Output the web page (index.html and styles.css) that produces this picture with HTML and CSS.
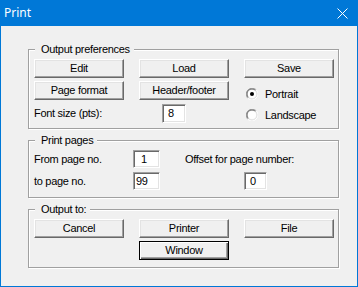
FILE: index.html
```html
<!DOCTYPE html>
<html>
<head>
<meta charset="utf-8">
<link rel="stylesheet" href="styles.css">
</head>
<body>
<div class="window">
  <div class="titlebar">
    <span class="title">Print</span>
    <svg class="close" width="11" height="11" viewBox="0 0 11 11"><path d="M0.5 0.5 L10.5 10.5 M10.5 0.5 L0.5 10.5" stroke="#fff" stroke-width="1" fill="none"/></svg>
  </div>
  <div class="content">
    <div class="group">
      <span class="legend">Output preferences</span>
      <div class="prefs">
        <button class="btn">Edit</button>
        <button class="btn">Load</button>
        <button class="btn">Save</button>
        <button class="btn">Page format</button>
        <button class="btn">Header/footer</button>
        <div class="radios">
          <label class="radio">
            <svg width="12" height="12" viewBox="0 0 12 12"><path d="M1.76 10.24 A6 6 0 0 1 10.24 1.76" stroke="#a0a0a0" fill="none"/><path d="M10.24 1.76 A6 6 0 0 1 1.76 10.24" stroke="#fff" fill="none"/><path d="M2.46 9.54 A5 5 0 0 1 9.54 2.46" stroke="#696969" fill="none"/><path d="M9.54 2.46 A5 5 0 0 1 2.46 9.54" stroke="#e3e3e3" fill="none"/><circle cx="6" cy="6" r="4" fill="#fff"/><circle cx="6" cy="6" r="2" fill="#000"/></svg>
            <span>Portrait</span>
          </label>
          <label class="radio">
            <svg width="12" height="12" viewBox="0 0 12 12"><path d="M1.76 10.24 A6 6 0 0 1 10.24 1.76" stroke="#a0a0a0" fill="none"/><path d="M10.24 1.76 A6 6 0 0 1 1.76 10.24" stroke="#fff" fill="none"/><path d="M2.46 9.54 A5 5 0 0 1 9.54 2.46" stroke="#696969" fill="none"/><path d="M9.54 2.46 A5 5 0 0 1 2.46 9.54" stroke="#e3e3e3" fill="none"/><circle cx="6" cy="6" r="4" fill="#fff"/></svg>
            <span>Landscape</span>
          </label>
        </div>
        <span class="label">Font size (pts):</span>
        <span class="field fontsize">8</span>
      </div>
    </div>

    <div class="group gap">
      <span class="legend">Print pages</span>
      <div class="pages">
        <span class="label">From page no.</span>
        <span class="field page from">1</span>
        <span></span>
        <span class="label">Offset for page number:</span>
        <span class="label">to page no.</span>
        <span class="field page to">99</span>
        <span></span>
        <span class="field offset">0</span>
      </div>
    </div>

    <div class="group gap">
      <span class="legend">Output to:</span>
      <div class="output">
        <button class="btn">Cancel</button>
        <button class="btn">Printer</button>
        <button class="btn">File</button>
        <span></span>
        <button class="btn default">Window</button>
      </div>
    </div>
  </div>
</div>
</body>
</html>
```
FILE: styles.css
```css
html, body {
  margin: 0;
  padding: 0;
  background: #ffffff;
}

.window {
  width: 358px;
  height: 287px;
  box-sizing: border-box;
  background: #f0f0f0;
  border: 1px solid #0078d7;
  border-top: 0;
  font-family: "Liberation Sans", Arial, sans-serif;
  font-size: 11px;
  letter-spacing: -0.3px;
  color: #000;
}

.titlebar {
  height: 26px;
  background: #0078d7;
  display: flex;
  align-items: flex-start;
  padding-left: 3px;
}

.title {
  font-family: "Noto Sans", "Open Sans", sans-serif;
  font-size: 12px;
  letter-spacing: 0;
  color: #fff;
  line-height: 16px;
  margin-top: 5px;
}

.close {
  margin-left: auto;
  margin-right: 9px;
  margin-top: 8px;
}

.content {
  padding: 23px 0 0 27px;
}

.group {
  position: relative;
  width: 311px;
  box-sizing: border-box;
  border: 1px solid #a0a0a0;
  box-shadow: 1px 1px 0 #fff, inset 1px 1px 0 #fff;
}

.group.gap {
  margin-top: 11px;
}

.legend {
  position: absolute;
  top: -7px;
  left: 6px;
  line-height: 13px;
  padding: 0 4px 0 6px;
  background: #f0f0f0;
  white-space: nowrap;
}

.label {
  display: flex;
  align-items: center;
  white-space: nowrap;
  line-height: 13px;
}

.btn {
  font-family: "Liberation Sans", Arial, sans-serif;
  font-size: 11px;
  letter-spacing: -0.3px;
  color: #000;
  margin: 0;
  padding: 0;
  background: #f0f0f0;
  border: 1px solid;
  border-color: #fff #696969 #696969 #fff;
  box-shadow: inset -1px -1px 0 #a0a0a0, inset 1px 1px 0 #e3e3e3;
  height: 19px;
  width: 90px;
  line-height: 15px;
}

.btn.default {
  border-color: #000;
  box-shadow: inset 1px 1px 0 #fff, inset -1px -1px 0 #696969, inset -2px -2px 0 #a0a0a0;
}

.field {
  display: block;
  box-sizing: border-box;
  background: #fff;
  border: 1px solid;
  border-color: #a0a0a0 #fff #fff #a0a0a0;
  box-shadow: inset 1px 1px 0 #696969, inset -1px -1px 0 #e3e3e3;
  line-height: 16px;
  padding-left: 4px;
  white-space: pre;
}

/* Output preferences */
.prefs {
  display: grid;
  grid-template-columns: 90px 90px 90px;
  grid-template-rows: 19px 19px 20px;
  column-gap: 15px;
  row-gap: 3px;
  padding: 9px 0 5px 5px;
}

.radios {
  grid-column: 3;
  grid-row: 2 / 4;
  display: flex;
  flex-direction: column;
  gap: 8px;
  padding-top: 6px;
}

.radio {
  display: flex;
  align-items: center;
  height: 13px;
  padding-left: 2px;
  gap: 7px;
}

.radio svg {
  flex: none;
}

.fontsize {
  grid-column: 2;
  grid-row: 3;
  align-self: end;
  width: 24px;
  height: 19px;
  margin-left: 23px;
  padding-left: 5px;
}

/* Print pages */
.pages {
  display: grid;
  grid-template-columns: 99px 27px 25px 1fr;
  grid-template-rows: 18px 18px;
  row-gap: 4px;
  padding: 9px 0 7px 5px;
}

.page {
  height: 18px;
}

.from {
  padding-left: 7px;
}

.to {
  padding-left: 2px;
}

.offset {
  width: 23px;
  height: 18px;
  margin-left: 59px;
  padding-left: 5px;
}

/* Output to */
.output {
  display: grid;
  grid-template-columns: 90px 90px 90px;
  grid-template-rows: 19px 19px;
  column-gap: 15px;
  row-gap: 3px;
  padding: 9px 0 7px 5px;
}
```
